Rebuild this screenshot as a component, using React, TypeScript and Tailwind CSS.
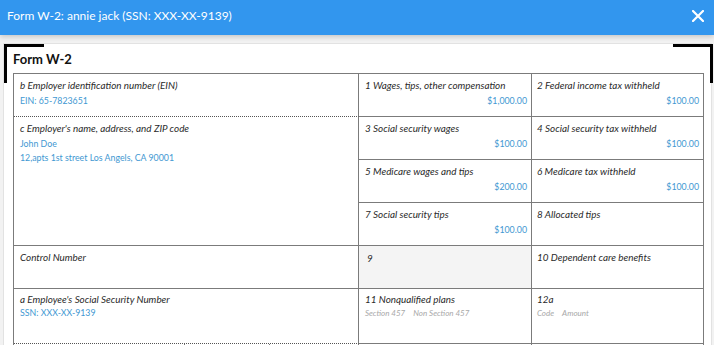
import React from "react";

const Label = ({ children }: { children: React.ReactNode }) => (
  <div className="text-[9.9px] leading-[14px] italic text-[#2a2a2a]">{children}</div>
);

const Value = ({ children, right }: { children: React.ReactNode; right?: boolean }) => (
  <div className={`mt-[2px] text-[8.8px] leading-[14px] text-[#3f98d2] ${right ? "text-right" : ""}`}>{children}</div>
);

const Sub = ({ children }: { children: React.ReactNode }) => (
  <span className="text-[8px] leading-[12px] italic text-[#a8a8a8]">{children}</span>
);

const App = () => {
  return (
    <div className="min-h-[345px] bg-[#f2f2f2] overflow-hidden" style={{ fontFamily: "Lato, 'Open Sans', sans-serif" }}>
      {/* HEADER */}
      <div className="relative z-10 flex items-center justify-between h-[35px] bg-[#3296ee] pl-[7px] pr-[8px] pb-[4px] shadow-[0_2px_5px_rgba(0,0,0,0.18)]">
        <span className="text-white text-[12px] leading-[16px]">Form W-2: annie jack (SSN: XXX-XX-9139)</span>
        <svg width="12" height="12" viewBox="0 0 12 12" className="mr-[2px]">
          <path d="M1 1 L11 11 M11 1 L1 11" stroke="white" strokeWidth="2.2" strokeLinecap="round" />
        </svg>
      </div>

      {/* CARD */}
      <div className="relative mt-[8px] ml-[3px] w-[709px] h-[400px] bg-white border border-[#e2e2e2] pl-[9px]">
        <span className="absolute left-0 top-0 w-[40px] h-[39px] border-l-[3px] border-t-[3px] border-black" />
        <span className="absolute right-[-2px] top-0 w-[40px] h-[39px] border-r-[3px] border-t-[3px] border-black" />

        <div className="pt-[7px] mb-[6px] text-[13px] leading-[16px] font-bold text-[#111]">Form W-2</div>

        <div className="grid grid-cols-[345px_173px_172px] grid-rows-[43px_43px_43px_43px_43px_55px_50px] w-[691px] border-t border-l border-[#7b7b7b]">
          {/* b EIN */}
          <div className="col-start-1 row-start-1 border-r border-b border-r-[#7b7b7b] border-b-[#555] px-[6px] pt-[4px]" style={{ borderBottomStyle: "dotted" }}>
            <Label>b Employer identification number (EIN)</Label>
            <Value>EIN: 65-7823651</Value>
          </div>
          {/* c employer name */}
          <div className="col-start-1 row-start-2 row-span-3 border-r border-b border-[#7b7b7b] px-[6px] pt-[4px]">
            <Label>c Employer's name, address, and ZIP code</Label>
            <Value>John Doe</Value>
            <div className="text-[8.8px] leading-[14px] text-[#3f98d2]">12,apts 1st street Los Angels, CA 90001</div>
          </div>

          <div className="col-start-2 row-start-1 border-r border-b border-[#7b7b7b] pl-[6px] pr-[4px] pt-[4px]">
            <Label>1 Wages, tips, other compensation</Label>
            <Value right>$1,000.00</Value>
          </div>
          <div className="col-start-3 row-start-1 border-r border-b border-[#7b7b7b] pl-[5px] pr-[4px] pt-[4px]">
            <Label>2 Federal income tax withheld</Label>
            <Value right>$100.00</Value>
          </div>
          <div className="col-start-2 row-start-2 border-r border-b border-[#7b7b7b] pl-[6px] pr-[4px] pt-[4px]">
            <Label>3 Social security wages</Label>
            <Value right>$100.00</Value>
          </div>
          <div className="col-start-3 row-start-2 border-r border-b border-[#7b7b7b] pl-[5px] pr-[4px] pt-[4px]">
            <Label>4 Social security tax withheld</Label>
            <Value right>$100.00</Value>
          </div>
          <div className="col-start-2 row-start-3 border-r border-b border-[#7b7b7b] pl-[6px] pr-[4px] pt-[4px]">
            <Label>5 Medicare wages and tips</Label>
            <Value right>$200.00</Value>
          </div>
          <div className="col-start-3 row-start-3 border-r border-b border-[#7b7b7b] pl-[5px] pr-[4px] pt-[4px]">
            <Label>6 Medicare tax withheld</Label>
            <Value right>$100.00</Value>
          </div>
          <div className="col-start-2 row-start-4 border-r border-b border-[#7b7b7b] pl-[6px] pr-[4px] pt-[4px]">
            <Label>7 Social security tips</Label>
            <Value right>$100.00</Value>
          </div>
          <div className="col-start-3 row-start-4 border-r border-b border-[#7b7b7b] pl-[5px] pr-[4px] pt-[4px]">
            <Label>8 Allocated tips</Label>
          </div>

          {/* control number row */}
          <div className="col-start-1 row-start-5 border-r border-b border-[#7b7b7b] px-[6px] pt-[4px]">
            <Label>Control Number</Label>
          </div>
          <div className="col-start-2 row-start-5 border-r border-b border-[#7b7b7b] bg-[#f4f4f4] pl-[8px] pt-[5px]">
            <Label>9</Label>
          </div>
          <div className="col-start-3 row-start-5 border-r border-b border-[#7b7b7b] pl-[5px] pt-[4px]">
            <Label>10 Dependent care benefits</Label>
          </div>

          {/* employee SSN row */}
          <div className="col-start-1 row-start-6 border-r border-b border-r-[#7b7b7b] border-b-[#555] px-[6px] pt-[3px]" style={{ borderBottomStyle: "dotted" }}>
            <Label>a Employee's Social Security Number</Label>
            <div className="text-[8.8px] leading-[14px] text-[#3f98d2]">SSN: XXX-XX-9139</div>
          </div>
          <div className="col-start-2 row-start-6 border-r border-b border-[#7b7b7b] pl-[6px] pt-[3px]">
            <Label>11 Nonqualified plans</Label>
            <div className="flex gap-[8px] mt-[1px]">
              <Sub>Section 457</Sub>
              <Sub>Non Section 457</Sub>
            </div>
          </div>
          <div className="col-start-3 row-start-6 border-r border-b border-[#7b7b7b] pl-[5px] pt-[3px]">
            <Label>12a</Label>
            <div className="flex gap-[8px] mt-[1px]">
              <Sub>Code</Sub>
              <Sub>Amount</Sub>
            </div>
          </div>

          {/* next row, cut off by the window */}
          <div className="col-start-1 row-start-7 grid grid-cols-[171px_85px_1fr] border-r border-b border-[#7b7b7b]">
            <div className="border-r border-[#7b7b7b]" />
            <div className="border-r border-[#7b7b7b]" />
            <div />
          </div>
          <div className="col-start-2 row-start-7 border-r border-b border-[#7b7b7b]" />
          <div className="col-start-3 row-start-7 border-r border-b border-[#7b7b7b]" />
        </div>
      </div>
    </div>
  );
};

export default App;
